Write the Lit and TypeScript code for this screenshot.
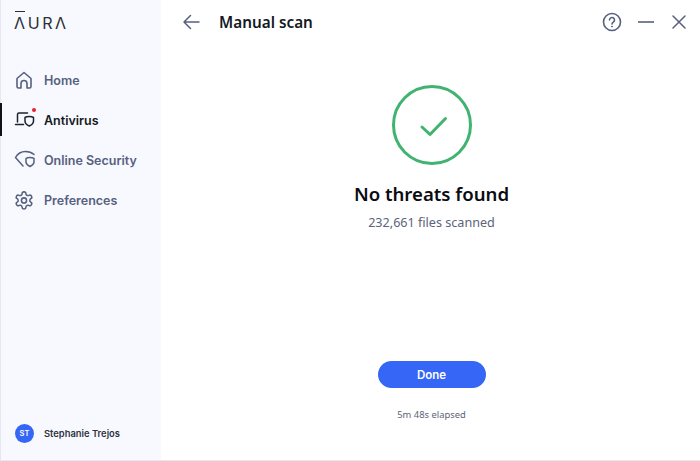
import { LitElement, html, css } from "lit";
import { customElement } from "lit/decorators.js";

@customElement("app-root")
export class AppRoot extends LitElement {
  static styles = css`
    :host { display: block; width: 700px; height: 461px; background: #fff; overflow: hidden; }
    * { box-sizing: border-box; }
    .app { display: flex; width: 700px; height: 461px; border-left: 1px solid #e4e8f2; border-bottom: 1px solid #e4e8f2; }
    .side { width: 160px; flex: none; background: #f8f9fe; display: flex; flex-direction: column; font-family: Inter, sans-serif; }
    .logo { height: 60px; padding: 11px 0 0 13px; font-size: 16px; font-weight: 400; letter-spacing: 2.6px; color: #2b2f3a; line-height: 24px; }
    .a { position: relative; display: inline-block; }
    .a::before { content: ""; position: absolute; left: 1px; right: 3px; top: 0; height: 1px; background: #2b2f3a; }
    nav { display: flex; flex-direction: column; }
    .item { height: 40px; display: flex; align-items: center; gap: 11px; padding-left: 14px; font-size: 12.5px; font-weight: 600; color: #56617f; position: relative; }
    .item svg { width: 18px; height: 20px; flex: none; overflow: visible; }
    .item.on { color: #14181f; }
    .item.on::before { content: ""; position: absolute; left: -1px; top: 3px; width: 2px; height: 33px; background: #101218; }
    .dot { position: absolute; left: 31px; top: 8px; width: 4px; height: 4px; border-radius: 50%; background: #e8202e; }
    .user { margin-top: auto; height: 54px; padding: 0 0 0 14px; display: flex; align-items: center; gap: 10px; font-size: 9.4px; font-weight: 600; color: #2d3240; }
    .avatar { width: 19px; height: 19px; border-radius: 50%; background: #3566f6; color: #fff; font-size: 7.5px; display: flex; align-items: center; justify-content: center; }
    main { flex: 1; display: flex; flex-direction: column; font-family: "Noto Sans", sans-serif; }
    header { height: 44px; display: flex; align-items: center; padding: 0 14px 0 22px; }
    h1 { margin: 0 0 0 19px; font-size: 15.3px; font-weight: 600; color: #14181f; flex: 1; line-height: 20px; }
    .ctl { display: flex; align-items: center; gap: 16px; }
    .ctl .x { margin-left: 2px; }
    .content { flex: 1; display: flex; flex-direction: column; align-items: center; padding: 41px 0 0 2px; }
    .ring { width: 80px; height: 80px; display: block; }
    h2 { margin: 15px 0 0; font-size: 18.6px; line-height: 28px; font-weight: 600; color: #0a0c12; }
    .count { margin-top: 6px; font-size: 12.6px; line-height: 17px; color: #5c6478; }
    .done { margin-top: 130px; width: 108px; height: 27px; border: 0; border-radius: 14px; background: #3566f6; color: #fff; font-family: Inter, sans-serif; font-size: 11.5px; font-weight: 600; padding: 0; }
    .time { margin-top: 20px; font-size: 9.4px; line-height: 14px; color: #5c6478; }
  `;

  render() {
    return html`<div class="app">
      <aside class="side">
        <div class="logo"><span class="a">Λ</span>URΛ</div>
        <nav>
          <div class="item">
            <svg viewBox="0 0 18 20" fill="none" stroke="#56617f" stroke-width="1.6" stroke-linejoin="round"><path d="M2 8.500 9 2.500l7 6v8a1.500 1.500 0 0 1-1.500 1.500H12v-4.500a3 3 0 0 0-6 0V18H3.500A1.500 1.500 0 0 1 2 16.500z"/></svg>
            Home
          </div>
          <div class="item on">
            <svg viewBox="0 0 18 20" fill="none" stroke="#1d2230" stroke-width="1.5" stroke-linecap="round" stroke-linejoin="round"><path d="M2.500 12V4.500A1.500 1.500 0 0 1 4 3h8.500"/><path d="M.5 14.500H8.500"/><path d="M10 7.500c2-1.200 6.500-1.200 8.500 0V11c0 2.500-2 4-4.250 5-2.250-1-4.250-2.500-4.250-5z"/></svg>
            Antivirus
            <span class="dot"></span>
          </div>
          <div class="item">
            <svg viewBox="0 0 18 20" fill="none" stroke="#56617f" stroke-width="1.5" stroke-linecap="round" stroke-linejoin="round"><path d="M8 16 .5 7.500C3 3 7 1.500 10.500 1.500c3.500 0 6 .8 8.500 3"/><path d="M11 8.500c1.500-1.200 6-1.200 8 0V12c0 2-2 3.500-4 4.500-2-1-4-2.500-4-4.500z"/></svg>
            Online Security
          </div>
          <div class="item">
            <svg viewBox="1.5 1 21 21" fill="none" stroke="#56617f" stroke-width="1.8" stroke-linecap="round" stroke-linejoin="round"><path d="M12.220 2h-.44a2 2 0 0 0-2 2v.18a2 2 0 0 1-1 1.730l-.43.25a2 2 0 0 1-2 0l-.15-.08a2 2 0 0 0-2.730.73l-.22.38a2 2 0 0 0 .73 2.730l.15.1a2 2 0 0 1 1 1.720v.51a2 2 0 0 1-1 1.740l-.15.09a2 2 0 0 0-.73 2.730l.22.38a2 2 0 0 0 2.730.73l.15-.08a2 2 0 0 1 2 0l.43.25a2 2 0 0 1 1 1.730V20a2 2 0 0 0 2 2h.44a2 2 0 0 0 2-2v-.18a2 2 0 0 1 1-1.730l.43-.25a2 2 0 0 1 2 0l.15.08a2 2 0 0 0 2.730-.73l.22-.39a2 2 0 0 0-.73-2.730l-.15-.08a2 2 0 0 1-1-1.740v-.5a2 2 0 0 1 1-1.740l.15-.09a2 2 0 0 0 .73-2.730l-.22-.38a2 2 0 0 0-2.730-.73l-.15.08a2 2 0 0 1-2 0l-.43-.25a2 2 0 0 1-1-1.730V4a2 2 0 0 0-2-2z"/><circle cx="12" cy="12" r="3"/></svg>
            Preferences
          </div>
        </nav>
        <div class="user"><span class="avatar">ST</span>Stephanie Trejos</div>
      </aside>
      <main>
        <header>
          <svg width="17" height="16" viewBox="0 0 17 16" fill="none" stroke="#56617f" stroke-width="1.500" stroke-linecap="round" stroke-linejoin="round"><path d="M1 8H16M7.500 1.500 1 8l6.500 6.500"/></svg>
          <h1>Manual scan</h1>
          <div class="ctl">
            <svg width="20" height="20" viewBox="0 0 20 20" fill="none" stroke="#56617f" stroke-width="1.600" stroke-linecap="round"><circle cx="10" cy="10" r="8.500"/><path d="M7.500 8a2.500 2.500 0 1 1 3.800 2.100c-.9.600-1.300 1-1.300 2"/><circle cx="10" cy="14.600" r=".5" fill="#56617f" stroke-width="1"/></svg>
            <svg width="16" height="14" viewBox="0 0 16 14" fill="none" stroke="#56617f" stroke-width="1.600"><path d="M0 7H16"/></svg>
            <svg class="x" width="14" height="14" viewBox="0 0 14 14" fill="none" stroke="#56617f" stroke-width="1.500" stroke-linecap="round"><path d="M1 1 13 13M13 1 1 13"/></svg>
          </div>
        </header>
        <section class="content">
          <svg class="ring" viewBox="0 0 80 80" fill="none" stroke="#3fb36f"><circle cx="40" cy="40" r="38.500" stroke-width="3"/><path d="M30 42 38 49.500 53.500 33.500" stroke-width="3" stroke-linecap="round" stroke-linejoin="round"/></svg>
          <h2>No threats found</h2>
          <div class="count">232,661 files scanned</div>
          <button class="done">Done</button>
          <div class="time">5m 48s elapsed</div>
        </section>
      </main>
    </div>`;
  }
}
